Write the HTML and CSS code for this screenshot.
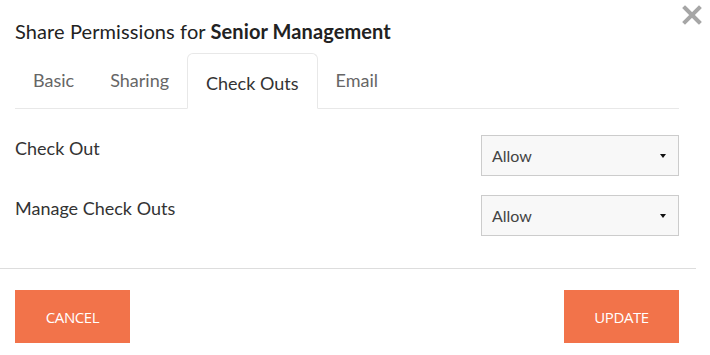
FILE: index.html
```html
<!DOCTYPE html>
<html>
<head>
<meta charset="utf-8">
<link rel="stylesheet" href="styles.css">
</head>
<body>
<div class="modal">
  <div class="close">
    <svg width="20" height="20" viewBox="0 0 20 20"><path d="M3 3 L17 17 M17 3 L3 17" stroke="#a6a6a6" stroke-width="4" stroke-linecap="square"/></svg>
  </div>
  <div class="body">
    <h1 class="title">Share Permissions for <b>Senior Management</b></h1>
    <ul class="tabs">
      <li class="tab">Basic</li>
      <li class="tab">Sharing</li>
      <li class="tab active">Check Outs</li>
      <li class="tab">Email</li>
    </ul>
    <div class="rows">
      <div class="row">
        <span class="label">Check Out</span>
        <div class="select"><span>Allow</span><i class="caret"></i></div>
      </div>
      <div class="row">
        <span class="label">Manage Check Outs</span>
        <div class="select"><span>Allow</span><i class="caret"></i></div>
      </div>
    </div>
  </div>
  <div class="footer">
    <button class="btn">CANCEL</button>
    <button class="btn">UPDATE</button>
  </div>
</div>
</body>
</html>
```
FILE: styles.css
```css
html, body {
  margin: 0;
  padding: 0;
  background: #fff;
}
body {
  font-family: Lato, "Open Sans", sans-serif;
  color: #333;
  width: 710px;
  height: 355px;
  overflow: hidden;
}
.modal {
  position: relative;
  width: 696px;
}
.close {
  position: absolute;
  left: 682px;
  top: 5px;
  width: 20px;
  height: 20px;
}
.close svg { display: block; }
.body {
  padding: 0 17px 0 15px;
}
.title {
  margin: 0;
  padding-top: 18px;
  height: 35px;
  font-size: 20px;
  font-weight: 400;
  line-height: 26px;
  letter-spacing: 0.1px;
  color: #222;
}
.title b { font-weight: 700; }
.tabs {
  list-style: none;
  margin: 0;
  padding: 0;
  display: flex;
  border-bottom: 1px solid #e8e8e8;
  height: 55px;
}
.tab {
  font-size: 18px;
  color: #666;
  padding: 16px 18px 0 18px;
  line-height: 22px;
  box-sizing: border-box;
}
.tab.active {
  color: #333;
  border: 1px solid #e8e8e8;
  border-bottom: 1px solid #fff;
  border-radius: 6px 6px 0 0;
  padding: 18px 18px 0 18px;
  height: 56px;
  margin-bottom: -1px;
}
.rows {
  padding-top: 27px;
  display: flex;
  flex-direction: column;
  gap: 20px;
}
.row {
  display: flex;
  justify-content: space-between;
  align-items: flex-start;
}
.label {
  font-size: 18px;
  color: #333;
  line-height: 22px;
  padding-top: 1px;
}
.select {
  width: 198px;
  height: 41px;
  margin-top: -1px;
  box-sizing: border-box;
  border: 1px solid #ccc;
  background: #f8f8f8;
  display: flex;
  align-items: center;
  justify-content: space-between;
  padding: 0 12px 0 10px;
  font-size: 16px;
  color: #444;
}
.caret {
  width: 0;
  height: 0;
  border-left: 3px solid transparent;
  border-right: 3px solid transparent;
  border-top: 4px solid #111;
}
.footer {
  margin-top: 32px;
  border-top: 1px solid #ddd;
  padding: 21px 17px 0 15px;
  display: flex;
  justify-content: space-between;
}
.btn {
  width: 115px;
  height: 53px;
  border: 0;
  background: #f2734a;
  color: #fff;
  font-family: "Open Sans", sans-serif;
  font-stretch: 90%;
  font-weight: 500;
  font-size: 15px;
  letter-spacing: -0.4px;
  padding: 0;
}
```
